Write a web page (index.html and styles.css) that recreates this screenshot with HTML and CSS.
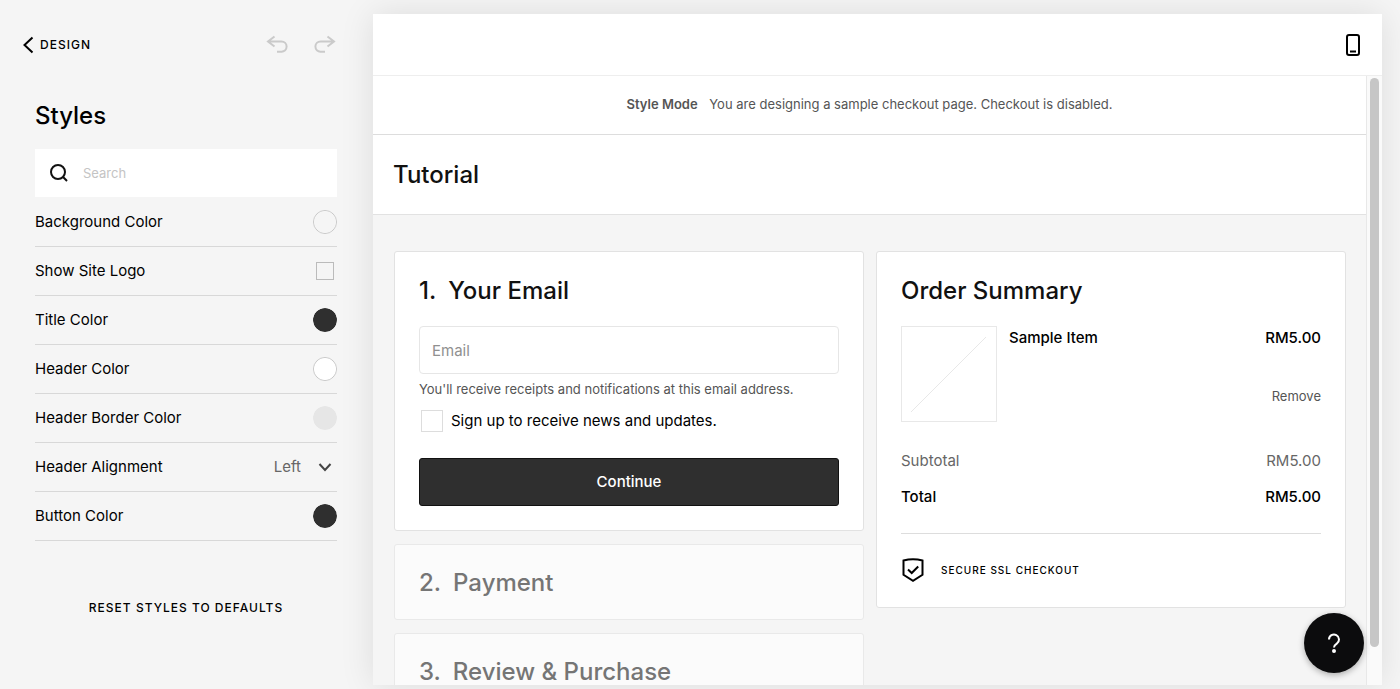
FILE: index.html
```html
<!DOCTYPE html>
<html lang="en">
<head>
	<meta charset="utf-8">
	<meta name="viewport" content="width=device-width, initial-scale=1">
	<title>Checkout Styles</title>
	<link rel="stylesheet" href="styles.css">
</head>
<body>
	<aside class="sidebar">
		<div class="topnav">
			<a class="back" href="#design">
				<svg width="12" height="18" viewBox="0 0 12 18" fill="none" stroke="#000" stroke-width="2"><path d="M10.5 1.5 2.5 9l8 7.5"/></svg>
				DESIGN
			</a>
			<div class="history">
				<button type="button" aria-label="Undo">
					<svg width="22" height="20" viewBox="0 0 22 20" fill="none" stroke="#cacaca" stroke-width="2"><path d="M8.500 1.500 2 6.500l6.500 5M2 6.500h13.500a4.800 4.800 0 0 1 0 10.200H11"/></svg>
				</button>
				<button type="button" aria-label="Redo">
					<svg width="22" height="20" viewBox="0 0 22 20" fill="none" stroke="#cacaca" stroke-width="2"><path d="M13.500 1.500l6.500 5-6.500 5M20 6.500H6.500a4.800 4.800 0 0 0 0 10.200H11"/></svg>
				</button>
			</div>
		</div>

		<h1>Styles</h1>

		<label class="search">
			<svg width="20" height="20" viewBox="0 0 20 20" fill="none" stroke="#111" stroke-width="2"><circle cx="9" cy="9" r="7"/><path d="M13.800 13.800 18 18"/></svg>
			<input type="search" placeholder="Search" aria-label="Search">
		</label>

		<div class="tweaks">
			<div class="tweak">
				<label for="bgcolor">Background Color</label>
				<input type="color" id="bgcolor" class="outlined" value="#f5f5f5">
			</div>
			<div class="tweak">
				<label for="sitelogo">Show Site Logo</label>
				<input type="checkbox" id="sitelogo" class="check">
			</div>
			<div class="tweak">
				<label for="titlecolor">Title Color</label>
				<input type="color" id="titlecolor" value="#2f2f2f">
			</div>
			<div class="tweak">
				<label for="headercolor">Header Color</label>
				<input type="color" id="headercolor" class="outlined" value="#ffffff">
			</div>
			<div class="tweak">
				<label for="bordercolor">Header Border Color</label>
				<input type="color" id="bordercolor" value="#e6e6e6">
			</div>
			<div class="tweak">
				<label for="alignment">Header Alignment</label>
				<span class="dropdown">
					<select id="alignment">
						<option>Left</option>
						<option>Center</option>
						<option>Right</option>
					</select>
					<svg width="14" height="10" viewBox="0 0 14 10" fill="none" stroke="#444" stroke-width="2"><path d="M1.500 2 7 8l5.500-6"/></svg>
				</span>
			</div>
			<div class="tweak">
				<label for="buttoncolor">Button Color</label>
				<input type="color" id="buttoncolor" value="#2f2f2f">
			</div>
		</div>

		<button type="button" class="reset">RESET STYLES TO DEFAULTS</button>
	</aside>

	<main class="preview">
		<div class="toolbar">
			<button type="button" aria-label="Mobile view">
				<svg width="14" height="22" viewBox="0 0 14 22" fill="none" stroke="#000" stroke-width="2"><rect x="1" y="1" width="12" height="20" rx="2"/><path d="M4 17.500h6"/></svg>
			</button>
		</div>

		<div class="frame">
			<div class="page">
				<p class="notice"><strong>Style Mode</strong> <span>You are designing a sample checkout page. Checkout is disabled.</span></p>

				<header class="site-header">
					<h2>Tutorial</h2>
				</header>

				<div class="checkout">
					<div class="steps">
						<form class="card">
							<h2><span class="num">1.</span>Your Email</h2>
							<input type="email" class="email" placeholder="Email" aria-label="Email">
							<p class="hint">You'll receive receipts and notifications at this email address.</p>
							<div class="signup">
								<input type="checkbox" id="news" class="check">
								<label for="news">Sign up to receive news and updates.</label>
							</div>
							<button type="submit" class="continue">Continue</button>
						</form>
						<section class="card pending">
							<h2><span class="num">2.</span>Payment</h2>
						</section>
						<section class="card pending">
							<h2><span class="num">3.</span>Review &amp; Purchase</h2>
						</section>
					</div>

					<section class="card summary">
						<h2>Order Summary</h2>
						<div class="item">
							<svg class="thumb" width="96" height="96" viewBox="0 0 96 96" fill="none" stroke="#e8e8e8"><rect x=".5" y=".5" width="95" height="95"/><path d="M10 86 85 11"/></svg>
							<strong>Sample Item</strong>
							<div class="item-side">
								<strong>RM5.00</strong>
								<button type="button" class="remove">Remove</button>
							</div>
						</div>
						<dl class="totals">
							<div><dt>Subtotal</dt><dd>RM5.00</dd></div>
							<div class="total"><dt>Total</dt><dd>RM5.00</dd></div>
						</dl>
						<div class="secure">
							<svg width="24" height="26" viewBox="0 0 24 26" fill="none" stroke="#000" stroke-width="2"><path d="M2.500 3.500Q12 .8 21.500 3.500v14.300L12 23.800 2.500 17.800z"/><path d="m7 12.500 3.700 3.500 6.500-6.500"/></svg>
							SECURE SSL CHECKOUT
						</div>
					</section>
				</div>
			</div>
			<div class="track"><div class="bar"></div></div>
		</div>
	</main>

	<button type="button" class="help" aria-label="Help">
		<svg width="14" height="22" viewBox="0 0 14 22" fill="none" stroke="#fff" stroke-width="2"><path d="M2 7.500a5 5 0 1 1 7.800 4.100C8 12.800 7 13.500 7 15.500"/><circle cx="7" cy="19" r="1" fill="#fff"/></svg>
	</button>
</body>
</html>
```

FILE: styles.css
```css
* {
	box-sizing: border-box;
}

body {
	display: flex;
	height: 100vh;
	margin: 0;
	overflow: hidden;
	background-color: #f5f5f5;
	color: #111;
	font-family: Inter, "Liberation Sans", sans-serif;
	font-size: 15px;
	line-height: 24px;
}

h1, h2, p, dl, dd {
	margin: 0;
}

h1, h2 {
	font-size: 24px;
	font-weight: 500;
	line-height: 32px;
}

h1 {
	color: #000;
}

button, input, select {
	margin: 0;
	padding: 0;
	border: none;
	background: none;
	color: inherit;
	font: inherit;
}

button {
	cursor: pointer;
}

svg {
	display: block;
	flex: none;
}

strong {
	font-weight: 500;
}

/* sidebar */
.sidebar {
	flex: none;
	width: 373px;
	padding: 0 36px 0 35px;
}

.topnav {
	display: flex;
	justify-content: space-between;
	align-items: center;
	margin: 33px 1px 43px -13px;
}

.back {
	display: flex;
	align-items: center;
	gap: 6px;
	color: #000;
	font-size: 12px;
	font-weight: 500;
	letter-spacing: 1px;
	text-decoration: none;
}

.history {
	display: flex;
	gap: 26px;
}

.search {
	display: flex;
	align-items: center;
	gap: 14px;
	height: 48px;
	margin-top: 17px;
	padding: 0 14px;
	background-color: #fff;
}

.search input {
	flex: 1;
	min-width: 0;
	font-size: 13px;
	outline: none;
}

.search input::placeholder {
	color: #c4c4c4;
}

.tweaks {
	padding-top: 1px;
}

.tweak {
	display: flex;
	justify-content: space-between;
	align-items: center;
	height: 49px;
	border-bottom: 1px solid #d8d8d8;
	color: #000;
}

input[type="color"] {
	width: 24px;
	height: 24px;
	appearance: none;
	border-radius: 50%;
	overflow: hidden;
}

input[type="color"]::-webkit-color-swatch-wrapper {
	padding: 0;
}

input[type="color"]::-webkit-color-swatch {
	border: none;
	border-radius: 50%;
}

input[type="color"].outlined {
	border: 1px solid #c8c8c8;
}

.check {
	flex: none;
	appearance: none;
	border: 1px solid #ddd;
}

.tweak .check {
	width: 18px;
	height: 18px;
	margin-right: 3px;
	border-color: #bbb;
}

.dropdown {
	display: flex;
	align-items: center;
	gap: 17px;
	padding-right: 5px;
}

.dropdown select {
	appearance: none;
	field-sizing: content;
	color: #666;
}

.reset {
	display: block;
	margin: 55px auto 0;
	color: #000;
	font-size: 12px;
	font-weight: 500;
	letter-spacing: 1px;
}

/* preview */
.preview {
	display: flex;
	flex: 1;
	flex-direction: column;
	min-width: 0;
	margin: 14px 18px 4px 0;
	background-color: #fff;
	box-shadow: 0 0 32px rgba(0, 0, 0, 0.1);
}

.toolbar {
	display: flex;
	flex: none;
	justify-content: flex-end;
	align-items: center;
	height: 62px;
	padding-right: 22px;
	border-bottom: 1px solid #eee;
}

.frame {
	display: flex;
	flex: 1;
	min-height: 0;
}

.page {
	flex: 1;
	min-width: 0;
	overflow: hidden;
	background-color: #f5f5f5;
}

.track {
	flex: none;
	width: 16px;
	padding: 2px 3px;
	border-left: 1px solid #e8e8e8;
	background-color: #fafafa;
}

.bar {
	width: 9px;
	height: 94%;
	margin: auto;
	border-radius: 5px;
	background-color: #c6c6c6;
}

.notice {
	padding: 16px 20px 18px;
	border-bottom: 1px solid #ddd;
	background-color: #fff;
	color: #555;
	font-size: 13px;
	text-align: center;
}

.notice strong {
	margin-right: 8px;
	font-weight: 600;
}

.site-header {
	padding: 24px 20px 23px;
	border-bottom: 1px solid #e2e2e2;
	background-color: #fff;
}

.checkout {
	display: grid;
	grid-template-columns: 1fr 1fr;
	gap: 12px;
	align-items: start;
	padding: 36px 20px 36px 21px;
}

.steps {
	display: grid;
	gap: 13px;
}

.card {
	padding: 23px 24px 24px;
	border: 1px solid #e2e2e2;
	border-radius: 3px;
	background-color: #fff;
}

.num {
	margin-right: 12px;
}

.pending {
	padding: 22px 24px 20px;
	border-color: #e9e9e9;
	background-color: #fbfbfb;
	color: #757575;
}

.email {
	display: block;
	width: 100%;
	height: 48px;
	margin-top: 19px;
	padding: 0 12px;
	border: 1px solid #e6e6e6;
	border-radius: 4px;
}

.email::placeholder {
	color: #909090;
}

.hint {
	margin-top: 3px;
	color: #555;
	font-size: 13px;
}

.signup {
	display: flex;
	align-items: center;
	gap: 8px;
	margin-top: 8px;
	padding-left: 2px;
	color: #000;
}

.signup .check {
	width: 22px;
	height: 22px;
}

.continue {
	width: 100%;
	height: 48px;
	margin-top: 25px;
	border: 1px solid #111;
	border-radius: 3px;
	background-color: #2f2f2f;
	color: #fff;
	font-weight: 500;
}

.item {
	display: flex;
	gap: 12px;
	margin-top: 19px;
	color: #000;
}

.item-side {
	display: flex;
	flex-direction: column;
	justify-content: space-between;
	align-items: flex-end;
	margin-left: auto;
	padding-bottom: 14px;
}

.remove {
	color: #555;
	font-size: 13px;
}

.totals {
	display: grid;
	gap: 12px;
	padding: 27px 0 24px;
	border-bottom: 1px solid #ddd;
}

.totals div {
	display: flex;
	justify-content: space-between;
	color: #666;
}

.totals .total {
	color: #000;
	font-weight: 500;
}

.secure {
	display: flex;
	align-items: center;
	gap: 16px;
	margin-top: 23px;
	color: #000;
	font-size: 10px;
	font-weight: 500;
	letter-spacing: 1px;
}

.help {
	position: fixed;
	right: 36px;
	bottom: 16px;
	display: flex;
	justify-content: center;
	align-items: center;
	width: 60px;
	height: 60px;
	border-radius: 50%;
	background-color: #0c0c0d;
	box-shadow: 0 2px 6px rgba(0, 0, 0, 0.3);
}
```
